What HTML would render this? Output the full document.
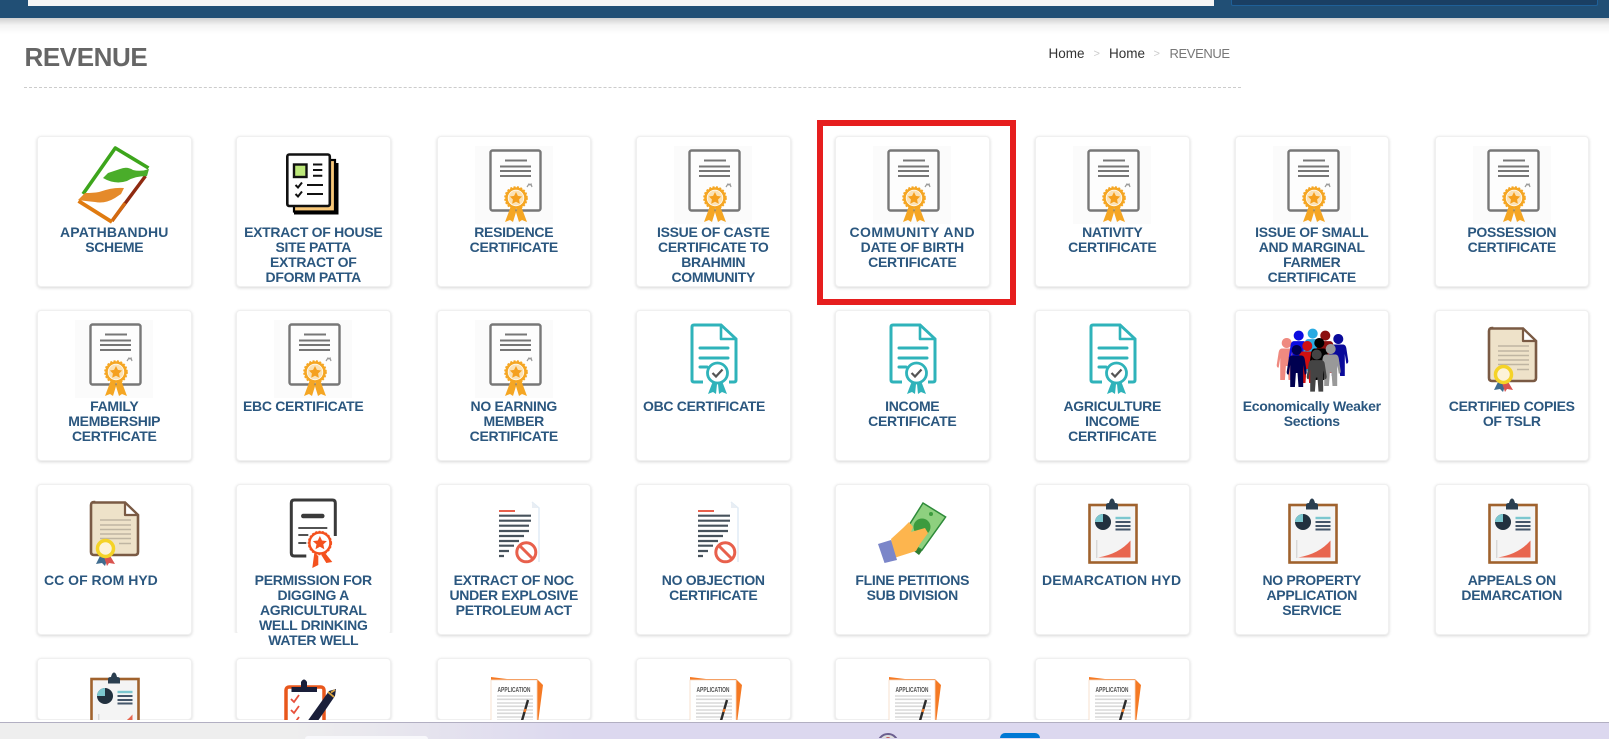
<!DOCTYPE html>
<html><head><meta charset="utf-8"><title>REVENUE</title>
<style>
html,body{margin:0;padding:0;background:#fff;width:1609px;height:739px;overflow:hidden}
body{position:relative;font-family:"Liberation Sans",sans-serif}
.a{position:absolute}
.card{position:absolute;width:152.500px;height:149px;background:#fff;border:1px solid #f0f0f0;border-radius:4px;box-shadow:0 1px 3px rgba(0,0,0,.16)}
.card svg{position:absolute;left:37px;top:9px;width:78px;height:78px;overflow:visible;filter:blur(.35px)}
.card p{position:absolute;left:0;right:0;top:88px;margin:0;text-align:center;font-size:14px;font-weight:bold;line-height:15px;letter-spacing:-.3px;color:#2b577f;white-space:nowrap}
.card p.l{text-align:left;left:6px}
.card.r4{height:60px}
.card.r4 svg{height:55px}
</style></head>
<body>
<svg width="0" height="0" style="position:absolute">
<defs>
<symbol id="cert" viewBox="0 0 78 78">
<rect width="78" height="78" fill="#fbfbfb"/>
<rect x="15.500" y="4.500" width="50" height="60" rx="2" fill="#fdfdfd" stroke="#777" stroke-width="2.400"/>
<path d="M30 14.500H52M25 20.500H56M25 25H56M25 30H56" stroke="#777" stroke-width="2"/>
<path d="M52 41l2-3 1 1 1-1 1 3" stroke="#999" stroke-width="1.200" fill="none"/>
<path d="M36 60L30 76l5-2 3 2 4-13zM46 60l6 16-5-2-3 2-4-13z" fill="#f5a623"/>
<circle cx="41" cy="52" r="9.500" fill="#fff" stroke="#f5a623" stroke-width="2.600"/>
<circle cx="41" cy="52" r="11" fill="none" stroke="#f5a623" stroke-width="1.600" stroke-dasharray="2 1.500"/>
<circle cx="41" cy="52" r="7.500" fill="#fbe2b5"/>
<path d="M41 46l1.900 3.900 4.200.6-3 3 .7 4.300-3.800-2-3.800 2 .7-4.300-3-3 4.200-.6z" fill="#f5a01e"/>
</symbol>
<symbol id="teal" viewBox="0 0 78 78">
<path d="M29 62H20q-2 0-2-2V7q0-2 2-2H47L62 19V60q0 2-2 2H55" fill="#fff" stroke="#2fb3ba" stroke-width="3"/>
<path d="M47 5V19H62z" fill="#fff" stroke="#2fb3ba" stroke-width="2.600" stroke-linejoin="round"/>
<path d="M26 28H54M26 38H54M26 47H33" stroke="#2fb3ba" stroke-width="3" stroke-linecap="round"/>
<path d="M39 61L34 74l5-2 3 2 1-10zM48 61l5 13-5-2-3 2-1-10z" fill="#2fb3ba"/>
<circle cx="43.500" cy="53" r="10" fill="#fff" stroke="#2fb3ba" stroke-width="2.800"/>
<path d="M38.500 53l3.500 3.500 6.500-7" fill="none" stroke="#555" stroke-width="2.200"/>
</symbol>
<path id="man" d="M0-5a5 5 0 1 1-.01 0zM-5 5.500H5Q7.500 6 8 9L10 22Q10 25 8 24.500L6.500 15V37H1.800L.8 23H-.8L-1.800 37H-6.500V15L-8 24.500Q-10 25-10 22L-8 9Q-7.500 6-5 5.500z"/>
<symbol id="people" viewBox="0 0 78 78">
<use href="#man" x="13.700" y="23" fill="#ef8a80"/>
<use href="#man" x="25.700" y="15.600" fill="#0c0ce0"/>
<use href="#man" x="39.700" y="13.600" fill="#29abe2"/>
<use href="#man" x="52.300" y="15.600" fill="#8b1010"/>
<use href="#man" x="65.300" y="19" fill="#0a0a9a"/>
<use href="#man" x="34.300" y="26" fill="#d01010"/>
<use href="#man" x="46.300" y="23" fill="#000"/>
<use href="#man" x="23.700" y="30" fill="#000050"/>
<use href="#man" x="57.700" y="29" fill="#999"/>
<use href="#man" x="43.700" y="34.600" fill="#444"/>
</symbol>
<symbol id="brown" viewBox="0 0 78 78">
<path d="M19 8.500H50L63 21V58q0 3-3 3H19q-3 0-3-3V11q0-3 3-3z" fill="#eee2c9" stroke="#7a5a44" stroke-width="2.600"/>
<path d="M50 8.500V21H63z" fill="#fff" stroke="#7a5a44" stroke-width="2.200" stroke-linejoin="round"/>
<path d="M25 26H56M25 31H56M25 35.500H56M25 40H56M25 44.500H56M44 49.500H56" stroke="#bfb5a2" stroke-width="1.600"/>
<path d="M26 60L21 70l6-1 3 3 3-9z" fill="#3f6c8f"/>
<path d="M34 60l6 10-6-1-2 3-3-9z" fill="#d9534f"/>
<circle cx="30.500" cy="54.500" r="8" fill="#fdf3d8" stroke="#f5d327" stroke-width="3.500"/>
</symbol>
<symbol id="perm" viewBox="0 0 78 78">
<g transform="translate(-3.700 0)">
<path d="M36 62H24q-3 0-3-3V9q0-3 3-3H62q3 0 3 3V42" fill="#fff" stroke="#3a3a3a" stroke-width="3"/>
<path d="M33 22H52" stroke="#3a3a3a" stroke-width="4.500" stroke-linecap="round"/>
<path d="M28 34H57M28 41H38M28 49H36" stroke="#3a3a3a" stroke-width="1.800"/>
<path d="M44 59L42 74l6-3v-9zM54 58l8 10-6 1-5-8z" fill="#f4511e"/>
<circle cx="49.600" cy="49" r="10.500" fill="#fff" stroke="#f4511e" stroke-width="2.400"/>
<circle cx="49.600" cy="49" r="11.500" fill="none" stroke="#f4511e" stroke-width="1.400" stroke-dasharray="2 1.500"/>
<path d="M49.600 42l2.100 4.500 4.900.6-3.600 3.300 1 4.800-4.400-2.400-4.400 2.400 1-4.800-3.600-3.300 4.900-.6z" fill="#f4511e"/>
</g>
</symbol>
<symbol id="nodoc" viewBox="0 0 78 78">
<g transform="translate(-6 0)">
<path d="M23 8H63L70 14V68H23z" fill="#fff"/>
<path d="M63 8L70 14V68" fill="none" stroke="#dfeaf4" stroke-width="1.400"/>
<path d="M63 8v6h7z" fill="#e9eef4"/>
<path d="M30 17H46" stroke="#e8604c" stroke-width="2"/>
<path d="M30 21.700H62M30 26.700H62M30 31.700H60M30 37H60M30 42H55M30 47H50M30 51.700H45M30 57H40M30 62H35" stroke="#47525c" stroke-width="2.200"/>
<circle cx="57.300" cy="58.300" r="9.500" fill="#fff" stroke="#e8604c" stroke-width="3"/>
<path d="M51 52L64 65" stroke="#e8604c" stroke-width="3"/>
</g>
</symbol>
<symbol id="money" viewBox="0 0 78 78">
<path d="M54 13L72 25 46 61 30 49z" fill="#2e7d32"/>
<path d="M50 9L72.600 23 49 56 28 44z" fill="#8ed07f" stroke="#2e8b3a" stroke-width="1.500"/>
<circle cx="49" cy="33" r="8.500" fill="#3c9b3e"/>
<circle cx="58" cy="20" r="2" fill="#3c9b3e"/>
<path d="M18 45L30 34 36 28 40 33 38 38 52 34 55 39 47 50 43 57 21 64z" fill="#fdb54e"/>
<path d="M5 50L18 46 24 66 11.500 69z" fill="#7b86c9"/>
</symbol>
<symbol id="clip" viewBox="0 0 78 78">
<rect x="16.500" y="11" width="47" height="57.500" fill="#f4f4f4" stroke="#a0622d" stroke-width="2.600"/>
<path d="M33 15.500V11Q33 9 36 9 37 4.500 39 4.500 41 4.500 42 9 45 9 45 11V15.500z" fill="#2b3f50"/>
<circle cx="30" cy="28" r="8" fill="#22313f"/>
<path d="M30 28V20A8 8 0 0 0 22 28z" fill="#7cc7cf"/>
<path d="M42.500 24H57.500" stroke="#7cc7cf" stroke-width="2.400"/>
<path d="M42.500 28H57.500M42.500 32H57.500M42.500 35.500H57.500" stroke="#44566a" stroke-width="2"/>
<path d="M25 63.500Q46 60 57.500 46.500V63.500z" fill="#e8664f"/>
<path d="M23.800 46V64" stroke="#ccc" stroke-width="1"/>
</symbol>
<symbol id="pen" viewBox="0 0 78 78">
<rect x="12" y="19" width="38" height="60" rx="3" fill="#fff" stroke="#e8571c" stroke-width="3.500"/>
<path d="M17.500 24V19H43V24zM27 19V14Q30 9 33 14V19z" fill="#1a1f3a"/>
<path d="M17 31l3 3 5-7M17 42l3 3 5-7M17 53l3 3 5-7" fill="none" stroke="#e8503c" stroke-width="1.800"/>
<path d="M30 58L55 23 62 21 61 28 37 63z" fill="#1a1f3a"/>
<path d="M54 24L60 29" stroke="#d9a441" stroke-width="1.800"/>
<path d="M57 24.500L61 22" stroke="#d9a441" stroke-width="1.800"/>
</symbol>
<symbol id="appl" viewBox="0 0 78 78">
<path d="M16 9L32 11H62L68 17 60 78H16z" fill="#f57a24"/>
<rect x="16" y="12" width="46" height="66" fill="#fff" stroke="#f6d9c4" stroke-width=".8"/>
<text x="39" y="24" text-anchor="middle" font-family="Liberation Sans" font-weight="bold" font-size="7" textLength="33" lengthAdjust="spacingAndGlyphs" fill="#555">APPLICATION</text>
<path d="M22 28H58M22 31.300H58M22 35H58M22 38.300H58M22 42H58M22 45.300H58M22 49H58M22 52.300H58M22 56H58" stroke="#d8d8d8" stroke-width="1.600"/>
<path d="M53 32L46 56" stroke="#2b2b2b" stroke-width="2.400"/>
<path d="M50.500 41L49.500 44" stroke="#f57a24" stroke-width="2.400"/>
</symbol>
<symbol id="apat" viewBox="0 0 78 78">
<path d="M8 48L40.300 2 73.500 22" fill="none" stroke="#3da51c" stroke-width="3.600" stroke-linejoin="round"/>
<path d="M70.500 30L37 75" fill="none" stroke="#8f2a10" stroke-width="3.400"/>
<path d="M50 57L37 75" fill="none" stroke="#d36a10" stroke-width="3.400"/>
<path d="M3.500 55L37 76" fill="none" stroke="#e07b10" stroke-width="3.800"/>
<path d="M74 23L72 30Q60 30 52 35Q40 39 28 32L33 27 45 23Q52 20 58 24Q66 26 74 23z" fill="#4aad2a"/>
<path d="M3 54L10 47Q18 47 24 46Q38 41 49 42L46 48 40 52Q30 58 20 56Q10 55 3 54z" fill="#e58a2a"/>
</symbol>
<symbol id="patta" viewBox="0 0 78 78">
<rect x="20" y="17" width="44.500" height="51.500" fill="#000"/>
<rect x="20" y="14" width="41" height="51.500" fill="#f9c879" stroke="#000" stroke-width="2.200"/>
<rect x="13.300" y="8.500" width="42.500" height="51.500" rx="2" fill="#fff" stroke="#111" stroke-width="2.600"/>
<rect x="20" y="18.500" width="12.500" height="12.500" fill="#bde87a" stroke="#111" stroke-width="2.400"/>
<path d="M39 18.500H48.300M39 24H48.300M39 29.700H48.300M33 39H49M33 48H49" stroke="#111" stroke-width="2"/>
<path d="M21.500 39l2.500 2.500 4-5M21.500 48l2.500 2.500 4-5" fill="none" stroke="#111" stroke-width="2"/>
</symbol>
</defs>
</svg>

<!-- header -->
<div class="a" style="left:0;top:0;width:1609px;height:18px;background:#214f75"></div>
<div class="a" style="left:28px;top:0;width:1186px;height:6px;background:#f5f5f5"></div>
<div class="a" style="left:1231px;top:0;width:365px;height:5px;background:#1a3f63;border:solid #1f6098;border-width:0 1.500px 1.500px;border-radius:0 0 2px 2px"></div>
<div class="a" style="left:0;top:18px;width:1609px;height:16px;background:linear-gradient(#cfcfcf,#f3f3f3 45%,#fff)"></div>

<div class="a" style="left:24.500px;top:42px;font-size:26px;line-height:30px;font-weight:bold;letter-spacing:-.42px;color:#666">REVENUE</div>
<div class="a" style="left:1048.500px;top:46px;font-size:13.500px;line-height:16px;color:#333">Home</div>
<div class="a" style="left:1093.500px;top:46px;font-size:11px;line-height:16px;color:#ccc">&gt;</div>
<div class="a" style="left:1109px;top:46px;font-size:13.500px;line-height:16px;color:#333">Home</div>
<div class="a" style="left:1153.500px;top:46px;font-size:11px;line-height:16px;color:#ccc">&gt;</div>
<div class="a" style="left:1169.500px;top:46px;font-size:13px;line-height:16px;letter-spacing:-.38px;color:#777">REVENUE</div>
<div class="a" style="left:24px;top:87px;width:1217px;border-top:1px dashed #ccc"></div>

<!-- row 1 -->
<div class="card" style="left:37px;top:136px"><svg><use href="#apat"/></svg><p><span style="letter-spacing:.15px">APATHBANDHU</span><br>SCHEME</p></div>
<div class="card" style="left:236px;top:136px"><svg><use href="#patta"/></svg><p>EXTRACT OF HOUSE<br>SITE PATTA<br>EXTRACT OF<br>DFORM PATTA</p></div>
<div class="card" style="left:436.500px;top:136px"><svg><use href="#cert"/></svg><p>RESIDENCE<br>CERTIFICATE</p></div>
<div class="card" style="left:636px;top:136px"><svg><use href="#cert"/></svg><p>ISSUE OF CASTE<br>CERTIFICATE TO<br>BRAHMIN<br>COMMUNITY</p></div>
<div class="card" style="left:835px;top:136px"><svg><use href="#cert"/></svg><p><span style="letter-spacing:.44px">COMMUNITY AND</span><br>DATE OF BIRTH<br>CERTIFICATE</p></div>
<div class="card" style="left:1035px;top:136px"><svg><use href="#cert"/></svg><p>NATIVITY<br>CERTIFICATE</p></div>
<div class="card" style="left:1234.500px;top:136px"><svg><use href="#cert"/></svg><p>ISSUE OF SMALL<br>AND MARGINAL<br>FARMER<br>CERTIFICATE</p></div>
<div class="card" style="left:1434.500px;top:136px"><svg><use href="#cert"/></svg><p>POSSESSION<br>CERTIFICATE</p></div>

<!-- row 2 -->
<div class="card" style="left:37px;top:310px"><svg><use href="#cert"/></svg><p>FAMILY<br>MEMBERSHIP<br>CERTFICATE</p></div>
<div class="card" style="left:236px;top:310px"><svg><use href="#cert"/></svg><p class="l">EBC CERTIFICATE</p></div>
<div class="card" style="left:436.500px;top:310px"><svg><use href="#cert"/></svg><p>NO EARNING<br>MEMBER<br>CERTIFICATE</p></div>
<div class="card" style="left:636px;top:310px"><svg><use href="#teal"/></svg><p class="l">OBC CERTIFICATE</p></div>
<div class="card" style="left:835px;top:310px"><svg><use href="#teal"/></svg><p>INCOME<br>CERTIFICATE</p></div>
<div class="card" style="left:1035px;top:310px"><svg><use href="#teal"/></svg><p>AGRICULTURE<br>INCOME<br>CERTIFICATE</p></div>
<div class="card" style="left:1234.500px;top:310px"><svg><use href="#people"/></svg><p>Economically Weaker<br>Sections</p></div>
<div class="card" style="left:1434.500px;top:310px"><svg><use href="#brown"/></svg><p>CERTIFIED COPIES<br>OF TSLR</p></div>

<!-- row 3 -->
<div class="card" style="left:37px;top:484px"><svg><use href="#brown"/></svg><p class="l" style="letter-spacing:.02px">CC OF ROM HYD</p></div>
<div class="card" style="left:236px;top:484px"><svg><use href="#perm"/></svg></div>
<div class="a" style="left:231px;top:633px;width:164px;height:16px;background:#fff"></div>
<div class="card" style="left:236px;top:484px;background:none;border-color:transparent;box-shadow:none"><p>PERMISSION FOR<br>DIGGING A<br>AGRICULTURAL<br>WELL DRINKING<br>WATER WELL</p></div>
<div class="card" style="left:436.500px;top:484px"><svg><use href="#nodoc"/></svg><p>EXTRACT OF NOC<br>UNDER EXPLOSIVE<br>PETROLEUM ACT</p></div>
<div class="card" style="left:636px;top:484px"><svg><use href="#nodoc"/></svg><p>NO OBJECTION<br>CERTIFICATE</p></div>
<div class="card" style="left:835px;top:484px"><svg><use href="#money"/></svg><p>FLINE PETITIONS<br>SUB DIVISION</p></div>
<div class="card" style="left:1035px;top:484px"><svg><use href="#clip"/></svg><p class="l" style="letter-spacing:.12px">DEMARCATION HYD</p></div>
<div class="card" style="left:1234.500px;top:484px"><svg><use href="#clip"/></svg><p>NO PROPERTY<br>APPLICATION<br>SERVICE</p></div>
<div class="card" style="left:1434.500px;top:484px"><svg><use href="#clip"/></svg><p>APPEALS ON<br>DEMARCATION</p></div>

<!-- row 4, clipped by the bottom bar -->
<div class="a" style="left:0;top:650px;width:1609px;height:72px;overflow:hidden">
<div class="card r4" style="left:37px;top:8px"><svg viewBox="0 0 78 55"><use href="#clip" width="78" height="78"/></svg></div>
<div class="card r4" style="left:236px;top:8px"><svg viewBox="0 0 78 55"><use href="#pen" width="78" height="78"/></svg></div>
<div class="card r4" style="left:436.500px;top:8px"><svg viewBox="0 0 78 55"><use href="#appl" width="78" height="78"/></svg></div>
<div class="card r4" style="left:636px;top:8px"><svg viewBox="0 0 78 55"><use href="#appl" width="78" height="78"/></svg></div>
<div class="card r4" style="left:835px;top:8px"><svg viewBox="0 0 78 55"><use href="#appl" width="78" height="78"/></svg></div>
<div class="card r4" style="left:1035px;top:8px"><svg viewBox="0 0 78 55"><use href="#appl" width="78" height="78"/></svg></div>
</div>
<div class="a" style="left:0;top:720px;width:1609px;height:2px;background:#fff"></div>

<!-- red highlight -->
<div class="a" style="left:817px;top:120px;width:187px;height:173px;border:6px solid #e61e1e"></div>

<!-- bottom bar -->
<div class="a" style="left:0;top:722px;width:1609px;height:17px;overflow:hidden;background:linear-gradient(90deg,#eeeeee 0,#eeeeee 18%,#dcd8ef 36%,#dcd8ef 100%);border-top:1.500px solid #b2afc2;box-sizing:border-box">
<div class="a" style="left:305px;top:13px;width:123px;height:3px;background:#f8f8fb;border-radius:3px 3px 0 0"></div>
<svg class="a" style="left:877px;top:10px" width="22" height="5"><circle cx="11" cy="11" r="10" fill="#ddd" stroke="#6b5f8f" stroke-width="2"/><circle cx="11" cy="7" r="3" fill="#c05050"/></svg>
<div class="a" style="left:1000px;top:10px;width:40px;height:5px;background:#0078d4;border-radius:5px 5px 0 0"></div>
</div>
</body></html>
